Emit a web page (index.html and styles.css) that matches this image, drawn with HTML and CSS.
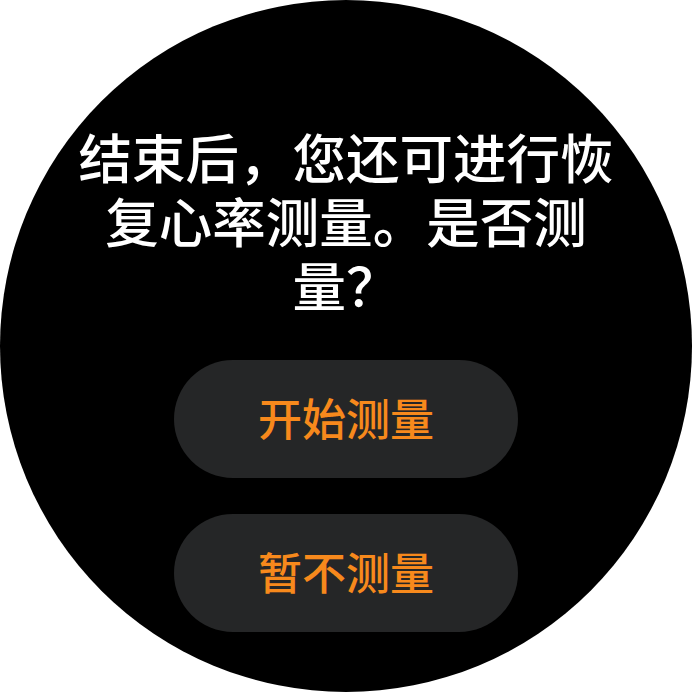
FILE: index.html
```html
<!DOCTYPE html>
<html lang="zh-CN">
<head>
    <meta charset="UTF-8">
    <meta name="viewport" content="width=device-width, initial-scale=1.0">
    <title>恢复心率测量</title>
    <link rel="stylesheet" href="styles.css">
</head>
<body>

    <div class="watch">
        <p class="question">结束后，您还可进行恢复心率测量。是否测量？</p>

        <div class="actions">
            <button class="action">开始测量</button>
            <button class="action">暂不测量</button>
        </div>
    </div>

</body>
</html>
```

FILE: styles.css
```css
/* 表盘 */
body {
    margin: 0;
    padding: 0;
    background: #ffffff;
    font-family: "Noto Sans CJK SC", "Noto Sans", sans-serif;
}

.watch {
    width: 692px;
    height: 692px;
    border-radius: 50%;
    background: #000000;
    display: flex;
    flex-direction: column;
    align-items: center;
    box-sizing: border-box;
    padding-top: 124px;
}

.question {
    width: 560px;
    margin: 0;
    color: #ffffff;
    font-size: 53.5px;
    font-weight: 500;
    line-height: 64px;
    text-align: center;
}

.actions {
    display: flex;
    flex-direction: column;
    gap: 36px;
    margin-top: 44px;
}

.action {
    width: 344px;
    height: 118px;
    border: none;
    border-radius: 59px;
    background: #252627;
    color: #f7891c;
    font-family: inherit;
    font-size: 44px;
    font-weight: 500;
    padding: 0 0 4px;
    cursor: pointer;
}
```
